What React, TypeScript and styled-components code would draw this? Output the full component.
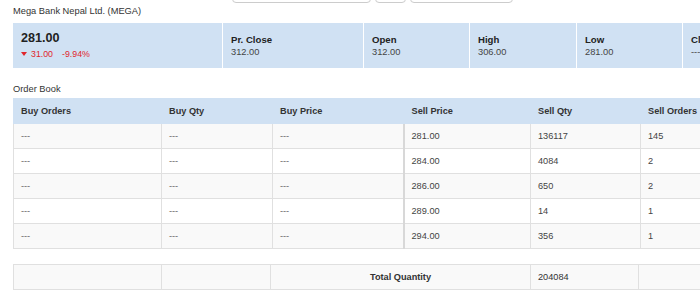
import React from "react";
import styled, { createGlobalStyle } from "styled-components";

const GlobalStyle = createGlobalStyle`
  html, body {
    margin: 0;
    padding: 0;
    background: #fff;
    overflow: hidden;
  }
  body {
    font-family: "Liberation Sans", Arial, sans-serif;
    color: #333;
  }
`;

const Page = styled.div`
  width: 775px;
  padding: 0 13px;
`;

const Toolbar = styled.div`
  display: flex;
  gap: 4px;
  margin-top: -20px;
  padding-left: 219px;
`;

const ToolButton = styled.div<{ w: number }>`
  width: ${({ w }) => w}px;
  height: 23px;
  box-sizing: border-box;
  border: 1px solid #ccc;
  border-radius: 4px;
  background: #fff;
`;

const Title = styled.div`
  font-size: 9.3px;
  line-height: 16px;
  height: 16px;
  margin-bottom: 4px;
  color: #333;
`;

const Summary = styled.div`
  display: flex;
  height: 45px;
  background: #d0e1f3;
`;

const SummaryCell = styled.div<{ w: number }>`
  flex: 0 0 ${({ w }) => w}px;
  box-sizing: border-box;
  display: flex;
  flex-direction: column;
  justify-content: center;
  padding: 0 8px;
  & + & {
    border-left: 1px solid #fff;
  }
`;

const Price = styled.div`
  font-size: 12.6px;
  font-weight: bold;
  line-height: 15px;
  color: #222;
`;

const Change = styled.div`
  display: flex;
  align-items: center;
  gap: 4px;
  margin-top: 2px;
  font-size: 8.8px;
  line-height: 12px;
  color: #e0262c;
`;

const Caret = styled.span`
  display: inline-block;
  width: 0;
  height: 0;
  border-left: 3px solid transparent;
  border-right: 3px solid transparent;
  border-top: 4px solid #e0262c;
`;

const Pct = styled.span`
  margin-left: 5px;
`;

const Label = styled.div`
  font-size: 9.6px;
  font-weight: bold;
  line-height: 13px;
  color: #222;
`;

const Value = styled.div`
  font-size: 9.3px;
  line-height: 13px;
  color: #444;
`;

const SectionTitle = styled.div`
  font-size: 9.3px;
  line-height: 16px;
  height: 16px;
  margin: 13px 0 1px;
  color: #333;
`;

const BookTable = styled.table`
  width: 775px;
  table-layout: fixed;
  border-collapse: collapse;
  font-size: 9.2px;
`;

const HeadCell = styled.th<{ divider?: boolean }>`
  height: 24px;
  padding: 0 7px;
  text-align: left;
  font-weight: bold;
  font-size: 9.2px;
  color: #333;
  background: #d0e1f3;
  border: 1px solid #d0e1f3;
  border-left: ${({ divider }) => (divider ? "2px solid #d0e1f3" : "1px solid #d0e1f3")};
  white-space: nowrap;
`;

const Row = styled.tr<{ striped: boolean }>`
  background: ${({ striped }) => (striped ? "#f9f9f9" : "#fff")};
`;

const Cell = styled.td<{ divider?: boolean; muted?: boolean }>`
  height: 24px;
  padding: 0 7px;
  color: ${({ muted }) => (muted ? "#666" : "#444")};
  border: 1px solid #e0e0e0;
  border-left: ${({ divider }) => (divider ? "2px solid #d8d8d8" : "1px solid #e0e0e0")};
  white-space: nowrap;
`;

const TotalTable = styled(BookTable)`
  margin-top: 15px;
`;

const TotalRow = styled.tr`
  background: #f9f9f9;
`;

const TotalCell = styled.td<{ strong?: boolean; center?: boolean }>`
  height: 24px;
  padding: 0 7px;
  color: #333;
  font-weight: ${({ strong }) => (strong ? "bold" : "normal")};
  font-size: 9.2px;
  text-align: ${({ center }) => (center ? "center" : "left")};
  border: 1px solid #e0e0e0;
`;

const stats = [
  { label: "Pr. Close", value: "312.00", w: 141 },
  { label: "Open", value: "312.00", w: 106 },
  { label: "High", value: "306.00", w: 107 },
  { label: "Low", value: "281.00", w: 106 },
  { label: "Close", value: "---", w: 106 },
];

const sells = [
  { price: "281.00", qty: "136117", orders: "145" },
  { price: "284.00", qty: "4084", orders: "2" },
  { price: "286.00", qty: "650", orders: "2" },
  { price: "289.00", qty: "14", orders: "1" },
  { price: "294.00", qty: "356", orders: "1" },
];

const bookCols = [148, 111, 131, 127, 110, 148];
const totalCols = [148, 109, 260, 108, 150];

export default function App() {
  return (
    <>
      <GlobalStyle />
      <Page>
        <Toolbar>
          <ToolButton w={139} />
          <ToolButton w={31} />
          <ToolButton w={103} />
        </Toolbar>
        <Title>Mega Bank Nepal Ltd. (MEGA)</Title>
        <Summary>
          <SummaryCell w={209}>
            <Price>281.00</Price>
            <Change>
              <Caret />
              <span>31.00</span>
              <Pct>-9.94%</Pct>
            </Change>
          </SummaryCell>
          {stats.map((s) => (
            <SummaryCell key={s.label} w={s.w}>
              <Label>{s.label}</Label>
              <Value>{s.value}</Value>
            </SummaryCell>
          ))}
        </Summary>

        <SectionTitle>Order Book</SectionTitle>
        <BookTable>
          <colgroup>
            {bookCols.map((w, i) => (
              <col key={i} style={{ width: w }} />
            ))}
          </colgroup>
          <thead>
            <tr>
              <HeadCell>Buy Orders</HeadCell>
              <HeadCell>Buy Qty</HeadCell>
              <HeadCell>Buy Price</HeadCell>
              <HeadCell divider>Sell Price</HeadCell>
              <HeadCell>Sell Qty</HeadCell>
              <HeadCell>Sell Orders</HeadCell>
            </tr>
          </thead>
          <tbody>
            {sells.map((s, i) => (
              <Row key={s.price} striped={i % 2 === 0}>
                <Cell muted>---</Cell>
                <Cell muted>---</Cell>
                <Cell muted>---</Cell>
                <Cell divider>{s.price}</Cell>
                <Cell>{s.qty}</Cell>
                <Cell>{s.orders}</Cell>
              </Row>
            ))}
          </tbody>
        </BookTable>

        <TotalTable>
          <colgroup>
            {totalCols.map((w, i) => (
              <col key={i} style={{ width: w }} />
            ))}
          </colgroup>
          <tbody>
            <TotalRow>
              <TotalCell />
              <TotalCell />
              <TotalCell strong center>
                Total Quantity
              </TotalCell>
              <TotalCell>204084</TotalCell>
              <TotalCell />
            </TotalRow>
          </tbody>
        </TotalTable>
      </Page>
    </>
  );
}
